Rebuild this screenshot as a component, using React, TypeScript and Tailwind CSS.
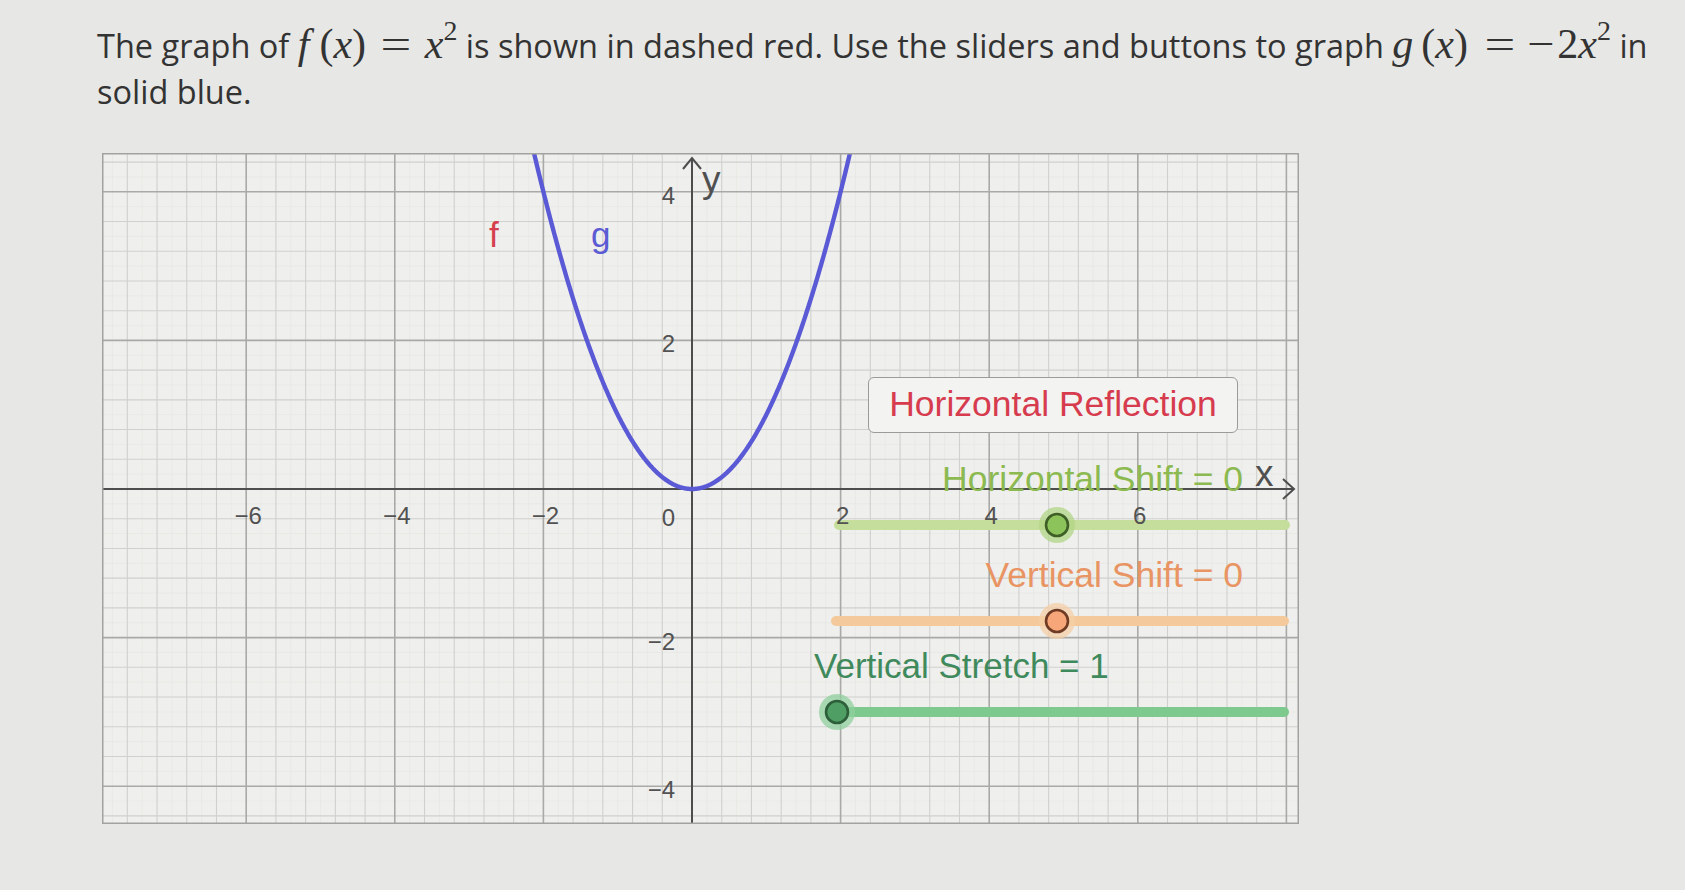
import React from "react";

const S = 74.3;
const OX = 590;
const OY = 336;
const W = 1197;
const H = 671;
const px = (x: number) => OX + x * S;
const py = (y: number) => OY - y * S;

function GridLines() {
  const fine: React.ReactNode[] = [];
  const minor: React.ReactNode[] = [];
  const major: React.ReactNode[] = [];
  const kx0 = Math.ceil(-OX / S / 0.2);
  const kx1 = Math.floor((W - OX) / S / 0.2);
  for (let k = kx0; k <= kx1; k++) {
    const X = px(k * 0.2);
    if (X <= 1 || X >= W - 1) continue;
    if (k % 10 === 0) {
      if (k !== 0) major.push(<line key={"v" + k} x1={X} y1={0} x2={X} y2={H} stroke="#a9a9a7" strokeWidth={1.6} />);
    } else if (k % 2 === 0) {
      minor.push(<line key={"v" + k} x1={X} y1={0} x2={X} y2={H} stroke="#d0d0ce" strokeWidth={1.1} />);
    } else {
      fine.push(<line key={"v" + k} x1={X} y1={0} x2={X} y2={H} stroke="#e7e7e5" strokeWidth={0.8} />);
    }
  }
  const ky0 = Math.ceil(-(H - OY) / S / 0.2);
  const ky1 = Math.floor(OY / S / 0.2);
  for (let k = ky0; k <= ky1; k++) {
    const Y = py(k * 0.2);
    if (Y <= 1 || Y >= H - 1) continue;
    if (k % 10 === 0) {
      if (k !== 0) major.push(<line key={"h" + k} x1={0} y1={Y} x2={W} y2={Y} stroke="#a9a9a7" strokeWidth={1.6} />);
    } else if (k % 2 === 0) {
      minor.push(<line key={"h" + k} x1={0} y1={Y} x2={W} y2={Y} stroke="#d0d0ce" strokeWidth={1.1} />);
    } else {
      fine.push(<line key={"h" + k} x1={0} y1={Y} x2={W} y2={Y} stroke="#e7e7e5" strokeWidth={0.8} />);
    }
  }
  return (
    <g>
      {fine}
      {minor}
      {major}
    </g>
  );
}

function curvePath() {
  const pts: string[] = [];
  for (let i = -220; i <= 220; i++) {
    const x = i / 100;
    pts.push(`${i === -220 ? "M" : "L"}${px(x).toFixed(2)} ${py(x * x).toFixed(2)}`);
  }
  return pts.join(" ");
}

function Slider({
  x1,
  x2,
  y,
  knob,
  track,
  fill,
  stroke,
  halo,
}: {
  x1: number;
  x2: number;
  y: number;
  knob: number;
  track: string;
  fill: string;
  stroke: string;
  halo: string;
}) {
  return (
    <g>
      <line x1={x1} y1={y} x2={x2} y2={y} stroke={track} strokeWidth={10} strokeLinecap="round" />
      <circle cx={knob} cy={y} r={18} fill={halo} opacity={0.75} />
      <circle cx={knob} cy={y} r={11} fill={fill} stroke={stroke} strokeWidth={2.6} />
    </g>
  );
}

const minus = (v: number) => (v < 0 ? "\u2212" + Math.abs(v) : String(v));

function Graph() {
  const d = curvePath();
  return (
    <div className="relative ml-[5px] mt-[40px] w-[1197px] h-[671px] bg-[#efefed]">
      <svg width={W} height={H} viewBox={`0 0 ${W} ${H}`} className="block font-['Liberation_Sans',Arial,sans-serif]">
        <defs>
          <clipPath id="box">
            <rect x={0} y={0} width={W} height={H} />
          </clipPath>
        </defs>
        <GridLines />
        {/* axes */}
        <line x1={0} y1={OY} x2={W - 5} y2={OY} stroke="#4d4d4d" strokeWidth={2} />
        <polyline
          points={`${W - 16},${OY - 10} ${W - 5},${OY} ${W - 16},${OY + 10}`}
          fill="none"
          stroke="#4d4d4d"
          strokeWidth={2}
        />
        <line x1={OX} y1={H} x2={OX} y2={5} stroke="#4d4d4d" strokeWidth={2} />
        <polyline points={`${OX - 9},16 ${OX},5 ${OX + 9},16`} fill="none" stroke="#4d4d4d" strokeWidth={2} />
        {/* y tick labels */}
        {[4, 2, -2, -4].map((v) => (
          <text key={"yl" + v} x={OX - 17} y={py(v) + 12} textAnchor="end" className="text-[24px] fill-[#525252]">
            {minus(v)}
          </text>
        ))}
        <text x={OX - 17} y={OY + 37} textAnchor="end" className="text-[24px] fill-[#525252]">
          0
        </text>
        <text x={600} y={39} className="text-[37px] fill-[#505050]">
          y
        </text>
        <text x={1153} y={333} className="text-[37px] fill-[#505050]">
          x
        </text>
        {/* curves */}
        <g clipPath="url(#box)">
          <path d={d} fill="none" stroke="#d9394b" strokeWidth={3} strokeDasharray="10 6" />
          <path d={d} fill="none" stroke="#5a5ad6" strokeWidth={4.4} strokeLinejoin="round" />
        </g>
        <text x={387} y={94} className="text-[35px] fill-[#d6404e]">
          f
        </text>
        <text x={489} y={94} className="text-[35px] fill-[#5b5bd4]">
          g
        </text>
        {/* sliders */}
        <text x={1141} y={338} textAnchor="end" className="text-[35.5px] fill-[#8cba50]">
          Horizontal Shift = 0
        </text>
        <Slider x1={737} x2={1183} y={372} knob={955} track="#c6de9c" fill="#8dc35b" stroke="#3f5f27" halo="#b2d686" />
        <text x={1141} y={434} textAnchor="end" className="text-[35.5px] fill-[#e99463]">
          Vertical Shift = 0
        </text>
        <Slider x1={734} x2={1182} y={468} knob={955} track="#f4ca9c" fill="#f7a679" stroke="#6f3b24" halo="#f6cfa6" />
        <text x={712} y={525} className="text-[35px] fill-[#3f8a5c]">
          Vertical Stretch = 1
        </text>
        <Slider x1={737} x2={1182} y={559} knob={735} track="#7ec98d" fill="#4f9e63" stroke="#2d5f3b" halo="#8fd09d" />
        {/* x tick labels (drawn over slider tracks) */}
        {[-6, -4, -2, 2, 4, 6].map((v) => (
          <text key={"xl" + v} x={px(v) + 2} y={OY + 35} textAnchor="middle" className="text-[24px] fill-[#525252]">
            {minus(v)}
          </text>
        ))}
        {/* border */}
        <rect x={0.75} y={0.75} width={W - 1.5} height={H - 1.5} fill="none" stroke="#a2a2a0" strokeWidth={1.5} />
      </svg>
      <button className="absolute left-[766px] top-[224px] w-[370px] h-[56px] rounded-[6px] border-[1.5px] border-[#9b9b99] bg-[#f3f3f1] flex items-center justify-center text-[35.5px] text-[#d63b4e] font-['Liberation_Sans',Arial,sans-serif] leading-none">
        Horizontal Reflection
      </button>
    </div>
  );
}

function FofX() {
  return (
    <span className="font-['Liberation_Serif',serif] text-[42px] whitespace-nowrap text-[#333]">
      <i>f</i>
      <span className="ml-[10px]">(</span>
      <i>x</i>)<span className="inline-block scale-x-[1.3] ml-[18px] mr-[17px]">=</span>
      <i>x</i>
      <span className="relative -top-[18px] text-[28px]">2</span>
    </span>
  );
}

function GofX() {
  return (
    <span className="font-['Liberation_Serif',serif] text-[42px] whitespace-nowrap text-[#333]">
      <i>g</i>
      <span className="ml-[8px]">(</span>
      <i>x</i>)<span className="inline-block scale-x-[1.3] ml-[20px] mr-[17px]">=</span>
      <span className="inline-block scale-x-[1.15] mr-[5px]">{"\u2212"}</span>2<i>x</i>
      <span className="relative -top-[18px] text-[28px]">2</span>
    </span>
  );
}

export default function App() {
  return (
    <div className="min-h-screen w-full bg-[#e7e7e5] pt-[23px] pl-[97px]">
      <p className="w-[1572px] font-['Open_Sans',sans-serif] text-[32.5px] leading-[43px] text-[#333]">
        The graph of <FofX /> is shown in dashed red. Use the sliders and buttons to graph <GofX /> in solid
        blue.
      </p>
      <Graph />
    </div>
  );
}
